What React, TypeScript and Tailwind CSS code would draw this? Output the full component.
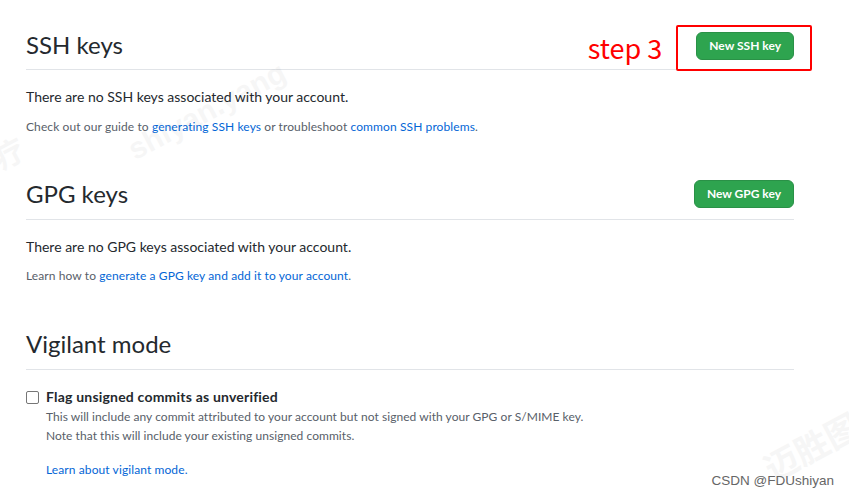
import React from "react";

const Link = ({ children }: { children: React.ReactNode }) => (
  <span className="text-[#0366d6]">{children}</span>
);

const GreenButton = ({ label }: { label: string }) => (
  <div className="h-[28px] px-[12px] flex items-center rounded-[6px] bg-[#2ea44f] border border-[#2a9147] text-white text-[12px] font-bold leading-none whitespace-nowrap">
    {label}
  </div>
);

export default function App() {
  return (
    <div
      className="relative w-[849px] h-[499px] bg-white overflow-hidden text-[#24292e]"
      style={{ fontFamily: "Lato, 'Noto Sans', sans-serif" }}
    >
      <div className="ml-[26px] w-[768px]">
        {/* SSH keys */}
        <div className="mt-[22px] h-[48px] flex items-start justify-between border-b border-[#e1e4e8]">
          <h2 className="mt-[8px] text-[24px] leading-[30px] font-normal">SSH keys</h2>
          <div className="mt-[7px] flex items-center">
            <span
              className="mr-[34px] mt-[4px] text-[27px] leading-[30px] text-[#ff0000]"
              style={{ fontFamily: "'Noto Sans CJK SC', 'Noto Sans', sans-serif" }}
            >
              step 3
            </span>
            <div className="relative">
              <GreenButton label="New SSH key" />
              <div className="absolute -top-[7px] -left-[20px] w-[136px] h-[46px] border-2 border-[#ff0000] rounded-[2px]" />
            </div>
          </div>
        </div>
        <p className="mt-[16px] text-[14px] leading-[21px]">There are no SSH keys associated with your account.</p>
        <p className="mt-[11px] text-[12px] leading-[18px] tracking-[0.1px] text-[#586069]">
          Check out our guide to <Link>generating SSH keys</Link> or troubleshoot <Link>common SSH problems</Link>.
        </p>

        {/* GPG keys */}
        <div className="mt-[37px] h-[47px] flex items-start justify-between border-b border-[#e1e4e8]">
          <h2 className="mt-[6px] text-[24px] leading-[30px] font-normal">GPG keys</h2>
          <div className="mt-[7px]">
            <GreenButton label="New GPG key" />
          </div>
        </div>
        <p className="mt-[16px] text-[14px] leading-[21px]">There are no GPG keys associated with your account.</p>
        <p className="mt-[10px] text-[12px] leading-[18px] tracking-[0.1px] text-[#586069]">
          Learn how to <Link>generate a GPG key and add it to your account</Link>.
        </p>

        {/* Vigilant mode */}
        <div className="mt-[35px] h-[50px] border-b border-[#e1e4e8]">
          <h2 className="pt-[9px] text-[24px] leading-[30px] font-normal">Vigilant mode</h2>
        </div>
        <div className="mt-[17px] flex items-start">
          <div className="mt-[4px] w-[13px] h-[13px] border border-[#767676] rounded-[2px] bg-white shrink-0" />
          <div className="ml-[7px]">
            <div className="text-[14px] leading-[20px] font-bold tracking-[0.2px]">Flag unsigned commits as unverified</div>
            <div className="text-[12px] leading-[19px] tracking-[0.05px] text-[#586069]">
              This will include any commit attributed to your account but not signed with your GPG or S/MIME key.
            </div>
            <div className="text-[12px] leading-[19px] tracking-[0.05px] text-[#586069]">
              Note that this will include your existing unsigned commits.
            </div>
            <div className="mt-[16px] text-[12px] leading-[18px] tracking-[0.1px]">
              <Link>Learn about vigilant mode.</Link>
            </div>
          </div>
        </div>
      </div>

      {/* watermarks */}
      <div
        className="absolute left-[120px] top-[88px] text-[30px] font-bold text-[#000] opacity-[0.03] -rotate-[28deg] whitespace-nowrap"
        style={{ fontFamily: "'Liberation Sans', sans-serif" }}
      >
        shiyan.yang
      </div>
      <div
        className="absolute left-[-6px] top-[130px] text-[30px] font-bold text-[#000] opacity-[0.03] -rotate-[28deg]"
        style={{ fontFamily: "'Noto Sans CJK SC', sans-serif" }}
      >
        疗
      </div>
      <div
        className="absolute left-[760px] top-[420px] text-[34px] font-bold text-[#000] opacity-[0.03] -rotate-[28deg] whitespace-nowrap"
        style={{ fontFamily: "'Noto Sans CJK SC', sans-serif" }}
      >
        迈胜图
      </div>
      <div
        className="absolute right-[15px] top-[472px] text-[13.5px] leading-[18px] text-[#666]"
        style={{ fontFamily: "'Liberation Sans', Arial, sans-serif" }}
      >
        CSDN @FDUshiyan
      </div>
    </div>
  );
}
